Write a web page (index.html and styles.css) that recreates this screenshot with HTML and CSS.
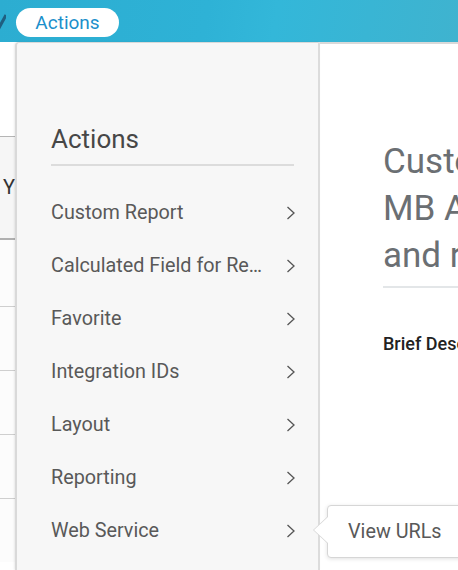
FILE: index.html
```html
<!DOCTYPE html>
<html lang="en">
<head>
    <meta charset="UTF-8">
    <title>Actions</title>
    <link rel="stylesheet" href="styles.css">
</head>
<body>

    <!-- top bar -->
    <div class="topbar">
        <svg class="caret" width="6" height="42" viewBox="0 0 6 42">
            <polyline points="-6,15 0,26 6,15" fill="none" stroke="#1f5f80" stroke-width="3"/>
        </svg>
        <div class="pill">Actions</div>
    </div>

    <div class="main">
        <!-- page table behind the menu -->
        <div class="table-strip">
            <div class="row head">Year</div>
            <div class="row r1"></div>
            <div class="row"></div>
            <div class="row"></div>
            <div class="row"></div>
            <div class="row"></div>
        </div>

        <!-- actions menu -->
        <div class="menu">
            <div class="menu-title">Actions</div>
            <div class="item"><span class="label">Custom Report</span><svg class="chev" width="10" height="14" viewBox="0 0 10 14"><polyline points="1.5,1 8,7 1.5,13"/></svg></div>
            <div class="item"><span class="label">Calculated Field for Reporting</span><svg class="chev" width="10" height="14" viewBox="0 0 10 14"><polyline points="1.5,1 8,7 1.5,13"/></svg></div>
            <div class="item"><span class="label">Favorite</span><svg class="chev" width="10" height="14" viewBox="0 0 10 14"><polyline points="1.5,1 8,7 1.5,13"/></svg></div>
            <div class="item"><span class="label">Integration IDs</span><svg class="chev" width="10" height="14" viewBox="0 0 10 14"><polyline points="1.5,1 8,7 1.5,13"/></svg></div>
            <div class="item"><span class="label">Layout</span><svg class="chev" width="10" height="14" viewBox="0 0 10 14"><polyline points="1.5,1 8,7 1.5,13"/></svg></div>
            <div class="item"><span class="label">Reporting</span><svg class="chev" width="10" height="14" viewBox="0 0 10 14"><polyline points="1.5,1 8,7 1.5,13"/></svg></div>
            <div class="item open">
                <span class="label">Web Service</span><svg class="chev" width="10" height="14" viewBox="0 0 10 14"><polyline points="1.5,1 8,7 1.5,13"/></svg>
                <!-- submenu -->
                <div class="submenu">View URLs</div>
            </div>
        </div>

        <!-- page content -->
        <div class="content">
            <div class="content-inner">
                <div class="page-title">Custom Report for<br>MB Actions Report<br>and related items</div>
                <div class="brief">Brief Description</div>
            </div>
        </div>
    </div>

</body>
</html>
```

FILE: styles.css
```css
body {
    margin: 0;
    width: 458px;
    height: 570px;
    overflow: hidden;
    font-family: Roboto, "Liberation Sans", sans-serif;
    background-color: #fff;
}

/* top bar */
.topbar {
    display: flex;
    align-items: center;
    height: 42px;
    background: linear-gradient(100deg, #2cadd1 0%, #2eb2d6 45%, #33b7d9 60%, #3fb3cf 100%);
}
.caret {
    display: block;
    margin-right: 10px;
}
.pill {
    width: 103px;
    height: 29px;
    margin-top: 3px;
    border-radius: 15px;
    background-color: #fff;
    color: #1b8fcb;
    font-size: 19px;
    line-height: 29px;
    text-align: center;
}

.main {
    display: flex;
    height: 528px;
}

/* table behind */
.table-strip {
    width: 15px;
    flex-shrink: 0;
    overflow: hidden;
    padding-top: 94px;
}
.row {
    height: 63px;
    border-top: 1px solid #cfcfcf;
    background-color: #fcfcfc;
}
.row.head {
    height: 101px;
    border-top: 1px solid #b5b5b5;
    border-bottom: 2px solid #b0b0b0;
    background-color: #f6f6f6;
    padding-left: 3px;
    font-size: 20px;
    line-height: 101px;
    color: #333;
    white-space: nowrap;
}
.row.r1 {
    height: 66px;
    border-top: none;
}

/* menu */
.menu {
    width: 305px;
    flex-shrink: 0;
    box-sizing: border-box;
    padding: 0 24px 0 34px;
    background-color: #f7f7f7;
    border-left: 2px solid #d9d9d9;
    border-right: 2px solid #dcdcdc;
    border-top: 1px solid #d9d9d9;
    border-top-left-radius: 4px;
    box-shadow: -1px 0 2px rgba(0, 0, 0, 0.08);
}
.menu-title {
    margin-top: 76px;
    padding-bottom: 5px;
    border-bottom: 2px solid #dcdcdc;
    font-size: 26px;
    line-height: 40px;
    color: #474747;
}
.menu-title + .item {
    margin-top: 20px;
}
.item {
    position: relative;
    display: flex;
    align-items: center;
    justify-content: space-between;
    height: 53px;
    font-size: 19.8px;
    color: #595959;
}
.label {
    width: 214px;
    white-space: nowrap;
    overflow: hidden;
    text-overflow: ellipsis;
}
.chev {
    display: block;
    margin-right: -2px;
}
.chev polyline {
    fill: none;
    stroke: #555;
    stroke-width: 1.3;
}

/* submenu */
.submenu {
    position: absolute;
    left: 276px;
    top: 1px;
    width: 150px;
    height: 53px;
    box-sizing: border-box;
    padding-left: 20px;
    background-color: #fff;
    border: 1px solid #d6d6d6;
    border-radius: 4px;
    box-shadow: 0 1px 4px rgba(0, 0, 0, 0.12);
    font-size: 19.8px;
    line-height: 51px;
    color: #595959;
}
.submenu::before {
    content: "";
    position: absolute;
    left: -15px;
    top: 10px;
    border-top: 14px solid transparent;
    border-bottom: 14px solid transparent;
    border-right: 15px solid #d6d6d6;
}
.submenu::after {
    content: "";
    position: absolute;
    left: -14px;
    top: 11px;
    border-top: 13px solid transparent;
    border-bottom: 13px solid transparent;
    border-right: 14px solid #fff;
}

/* content */
.content {
    flex: 1;
    overflow: hidden;
    border-top: 2px solid #d9d9d9;
}
.content-inner {
    width: 360px;
    padding: 94px 0 0 63px;
}
.page-title {
    padding-bottom: 7px;
    border-bottom: 2px solid #e3e6e8;
    font-size: 35px;
    line-height: 47px;
    color: #6b6f73;
    white-space: nowrap;
}
.brief {
    margin-top: 46px;
    font-size: 18px;
    font-weight: 500;
    line-height: 20px;
    color: #222;
    white-space: nowrap;
}
```
